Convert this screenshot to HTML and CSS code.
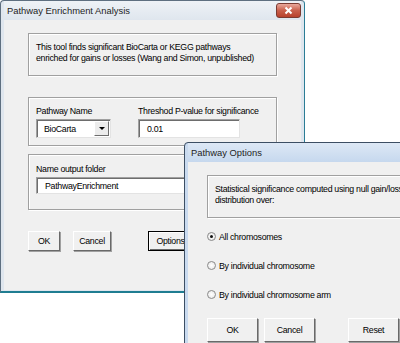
FILE: index.html
```html
<!DOCTYPE html>
<html lang="en">
<head>
    <meta charset="UTF-8">
    <title>Pathway Enrichment Analysis</title>
    <link rel="stylesheet" href="styles.css">
</head>
<body>
    <div class="desktop">
        <div class="window main-window">
            <div class="titlebar">
                <span class="title">Pathway Enrichment Analysis</span>
                <span class="close-btn">
                    <svg width="13" height="9" viewBox="0 0 13 9"><path d="M3.5 1.5 L9.5 7.5 M9.5 1.5 L3.5 7.5" stroke="#fff" stroke-width="2"/></svg>
                </span>
            </div>
            <div class="client">
                <div class="frame info-frame">
                    This tool finds significant BioCarta or KEGG pathways<br>
                    enriched for gains or losses (Wang and Simon, unpublished)
                </div>
                <div class="frame params-frame">
                    <div class="field">
                        <label>Pathway Name</label>
                        <div class="combo">
                            <span class="combo-text">BioCarta</span>
                            <span class="combo-btn"><span class="arrow"></span></span>
                        </div>
                    </div>
                    <div class="field">
                        <label>Threshod P-value for significance</label>
                        <div class="textbox threshold">0.01</div>
                    </div>
                </div>
                <div class="frame folder-frame">
                    <label>Name output folder</label>
                    <div class="textbox folder">PathwayEnrichment</div>
                </div>
                <div class="buttons">
                    <span class="btn ok">OK</span>
                    <span class="btn cancel">Cancel</span>
                    <span class="btn options default">Options</span>
                </div>
            </div>
        </div>

        <div class="window options-window">
            <div class="titlebar active">
                <span class="title">Pathway Options</span>
            </div>
            <div class="client">
                <div class="frame stat-frame">
                    Statistical significance computed using null gain/loss<br>
                    distribution over:
                </div>
                <div class="radio-list">
                    <div class="radio-row"><span class="radio checked"></span>All chromosomes</div>
                    <div class="radio-row"><span class="radio"></span>By individual chromosome</div>
                    <div class="radio-row"><span class="radio"></span>By individual chromosome arm</div>
                </div>
                <div class="buttons">
                    <span class="btn wide">OK</span>
                    <span class="btn wide">Cancel</span>
                    <span class="btn wide reset">Reset</span>
                </div>
            </div>
        </div>
    </div>
</body>
</html>
```

FILE: styles.css
```css
body {
    margin: 0;
    background: #fff;
    font-family: 'Liberation Sans', Arial, sans-serif;
    font-size: 8.8px;
    letter-spacing: -0.3px;
    color: #000;
}
.desktop {
    position: relative;
    width: 400px;
    height: 343px;
    overflow: hidden;
    white-space: nowrap;
}
.window {
    box-sizing: border-box;
    border: 1px solid #5e6f80;
    border-radius: 4px 4px 0 0;
    background: #dfe6ee;
    padding: 0 3px 3px 3px;
}
.main-window {
    width: 305px;
    height: 293px;
    border-right-color: #2b7d96;
    border-bottom: 2px solid #1f7d91;
}
.titlebar {
    height: 19px;
    display: flex;
    align-items: center;
    justify-content: space-between;
    background: linear-gradient(#eef2f6, #dfe6ee);
}
.titlebar.active {
    background: linear-gradient(#dde8f5, #c6d8ee);
}
.title {
    font-size: 9.4px;
    letter-spacing: 0;
    padding-left: 3px;
    color: #1e1e1e;
}
.close-btn {
    width: 23px;
    height: 13px;
    border: 1px solid #7a3b32;
    border-radius: 3px;
    background: linear-gradient(#e9a99c, #c9604c 50%, #b8412c);
    display: flex;
    align-items: center;
    justify-content: center;
}
.client {
    background: #f0f0f0;
    padding: 13px 0 0 24px;
    height: 257px;
}
.frame {
    box-sizing: border-box;
    width: 249px;
    border: 1px solid #a0a0a0;
    box-shadow: inset 1px 1px #fff, 1px 1px #fff;
    padding: 7px 7px 0 7px;
    line-height: 11px;
}
.info-frame {
    height: 43px;
    padding-top: 8px;
}
.params-frame {
    margin-top: 21px;
    height: 49px;
    display: flex;
    gap: 27px;
    padding-top: 7px;
}
.field label,
.folder-frame label {
    display: block;
    line-height: 13px;
}
.combo {
    box-sizing: border-box;
    width: 75px;
    height: 19px;
    margin-top: 1px;
    display: flex;
    background: #fff;
    border: 1px solid #a0a0a0;
    border-right-color: #e3e3e3;
    border-bottom-color: #e3e3e3;
    box-shadow: inset 1px 1px #6d6d6d;
}
.combo-text {
    flex: 1;
    padding: 4px 0 0 7px;
}
.combo-btn {
    width: 13px;
    margin: 1px 1px 1px 0;
    background: #ececec;
    border: 1px solid #fff;
    border-right-color: #6d6d6d;
    border-bottom-color: #6d6d6d;
    display: flex;
    align-items: center;
    justify-content: center;
}
.arrow {
    border-left: 3px solid transparent;
    border-right: 3px solid transparent;
    border-top: 3px solid #000;
}
.textbox {
    box-sizing: border-box;
    height: 19px;
    margin-top: 1px;
    padding: 4px 0 0 8px;
    background: #fff;
    border: 1px solid #a0a0a0;
    border-right-color: #e3e3e3;
    border-bottom-color: #e3e3e3;
    box-shadow: inset 1px 1px #6d6d6d;
}
.threshold {
    width: 102px;
}
.folder-frame {
    margin-top: 8px;
    height: 56px;
    padding-top: 8px;
}
.folder {
    width: 200px;
    height: 17px;
    padding-top: 3px;
}
.buttons {
    display: flex;
    margin-top: 21px;
}
.btn {
    box-sizing: border-box;
    height: 20px;
    display: flex;
    align-items: center;
    justify-content: center;
    background: #f0f0f0;
    border: 1px solid #fff;
    border-right-color: #696969;
    border-bottom-color: #696969;
    box-shadow: 1px 1px #a0a0a0;
}
.ok {
    width: 32px;
}
.cancel {
    width: 38px;
    margin-left: 13px;
}
.options {
    width: 45px;
    margin-left: 37px;
}
.btn.default {
    border: 1px solid #000;
    box-shadow: inset 1px 1px #fff, inset -1px -1px #696969;
}
.options-window {
    position: absolute;
    left: 184px;
    top: 142px;
    width: 260px;
    height: 230px;
    border-color: #3c4e63;
    background: #c9daef;
}
.options-window .client {
    padding: 13px 0 0 19px;
    height: 200px;
}
.stat-frame {
    width: 240px;
    height: 43px;
    padding-top: 8px;
}
.radio-list {
    margin-top: 12px;
    display: flex;
    flex-direction: column;
    gap: 16px;
}
.radio-row {
    display: flex;
    align-items: center;
    height: 13px;
}
.radio {
    box-sizing: border-box;
    width: 9px;
    height: 9px;
    margin-right: 3px;
    border-radius: 50%;
    border: 1px solid #8a8a8a;
    background: radial-gradient(#fff, #e4e4e4);
    position: relative;
}
.radio.checked::after {
    content: "";
    position: absolute;
    left: 2px;
    top: 2px;
    width: 3px;
    height: 3px;
    border-radius: 50%;
    background: #111;
}
.options-window .buttons {
    margin-top: 17px;
    gap: 6px;
}
.btn.wide {
    width: 51px;
    height: 24px;
}
.btn.reset {
    margin-left: 27px;
}
```
